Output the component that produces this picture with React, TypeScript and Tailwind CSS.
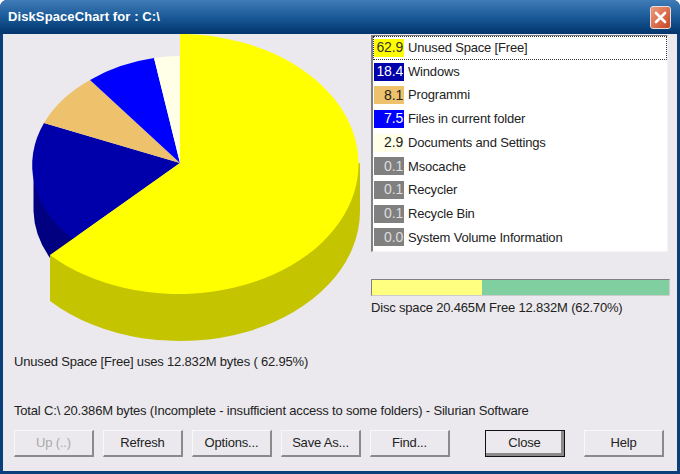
const rows = [
  { value: "62.9", label: "Unused Space [Free]", swatch: "bg-[#ffff00] text-[#333]" },
  { value: "18.4", label: "Windows", swatch: "bg-[#0000aa] text-white" },
  { value: "8.1", label: "Programmi", swatch: "bg-[#eec26c] text-[#222]" },
  { value: "7.5", label: "Files in current folder", swatch: "bg-[#0000ff] text-white" },
  { value: "2.9", label: "Documents and Settings", swatch: "bg-[#ffffe8] text-[#222]" },
  { value: "0.1", label: "Msocache", swatch: "bg-[#808080] text-[#ddd]" },
  { value: "0.1", label: "Recycler", swatch: "bg-[#808080] text-[#ddd]" },
  { value: "0.1", label: "Recycle Bin", swatch: "bg-[#808080] text-[#ddd]" },
  { value: "0.0", label: "System Volume Information", swatch: "bg-[#808080] text-[#ddd]" },
];

function Pie() {
  return (
    <svg width="368" height="316" viewBox="3 34 368 316" className="block shrink-0">
      {/* side walls */}
      <path d="M33.5 163 L33.5 211 A147 107 0 0 0 50 258 L80 240 Z" fill="#000080" />
      <path d="M50 255 L50 301 A180 130 0 0 0 360 211 L360 163 Z" fill="#c4c400" />
      {/* small slices */}
      <path d="M180 163 L44 123 A147 107 0 0 0 73 239 Z" fill="#0000aa" />
      <path d="M180 163 L90 80 A147 107 0 0 0 44 123 Z" fill="#eec26c" />
      <path d="M180 163 L154 58 A147 107 0 0 0 90 80 Z" fill="#0000ff" />
      <path d="M180 163 L180 56 A147 107 0 0 0 154 58 Z" fill="#ffffe8" />
      {/* free space */}
      <path d="M180 163 L180 34 A180 130 0 1 1 50 255 Z" fill="#ffff00" />
    </svg>
  );
}

function Button({ label, className = "" }: { label: string; className?: string }) {
  return (
    <button
      className={`h-[27px] w-[80px] bg-[#ebe9ed] border border-[#f8f8f8] border-r-[#8a8a8a] border-b-[#8a8a8a] border-b-2 border-r-2 text-[13px] tracking-[-0.18px] ${className}`}
    >
      {label}
    </button>
  );
}

export default function App() {
  return (
    <div className="w-[680px] h-[474px] bg-white font-['Liberation_Sans',sans-serif] text-[13px] tracking-[-0.18px] text-[#222] overflow-hidden">
      <div className="w-full h-full flex flex-col rounded-t-[7px] overflow-hidden bg-[#0a3f7c] pb-[3px]">
        {/* title bar */}
        <div className="h-[34px] shrink-0 flex items-center justify-between pl-[8px] pr-[9px] bg-gradient-to-b from-[#3f7cb8] via-[#1a5a98] to-[#03356d]">
          <span className="text-[13px] font-bold text-white tracking-[0.1px]">
            DiskSpaceChart for : C:\
          </span>
          <div className="w-[21px] h-[23px] rounded-[3px] bg-gradient-to-br from-[#ee9a7c] to-[#c6431f] border border-[#e8e0d8] flex items-center justify-center">
            <svg width="13" height="13" viewBox="0 0 13 13">
              <path d="M2 2 L11 11 M11 2 L2 11" stroke="white" strokeWidth="2.6" strokeLinecap="round" />
            </svg>
          </div>
        </div>

        {/* dialog body */}
        <div className="flex-1 mx-[3px] bg-[#ebe9ed] flex flex-col min-h-0">
          <div className="flex h-[316px]">
            <Pie />
            <div className="flex flex-col pt-[1px]">
              <ul className="w-[297px] h-[217px] bg-white border-l-2 border-t border-[#808080] border-r border-r-[#f4f4f4] border-b border-b-[#f4f4f4]">
                {rows.map((r, i) => (
                  <li
                    key={r.label}
                    className={`h-[23.7px] flex items-center gap-[4px] pl-[1px] ${i === 0 ? "outline-1 outline-dotted outline-[#333] -outline-offset-1" : ""}`}
                  >
                    <span className={`w-[30px] h-[18px] flex items-center justify-end pr-[1px] text-[14px] ${r.swatch}`}>
                      {r.value}
                    </span>
                    <span>{r.label}</span>
                  </li>
                ))}
              </ul>
              <div className="mt-[27px] w-[299px] h-[17px] flex border border-[#808080] border-r-[#ccc] border-b-[#ccc] bg-[#7fcfa0]">
                <div className="w-[110px] bg-[#ffff80]" />
              </div>
              <p className="mt-[4px] leading-[16px]">Disc space 20.465M Free 12.832M (62.70%)</p>
            </div>
          </div>

          <p className="ml-[11px] mt-[4px] leading-[16px]">Unused Space [Free] uses 12.832M bytes ( 62.95%)</p>
          <p className="ml-[11px] mt-[33px] leading-[16px]">
            Total C:\ 20.386M bytes (Incomplete - insufficient access to some folders) - Silurian Software
          </p>

          <div className="flex mt-[11px] ml-[11px]">
            <Button label="Up (..)" className="text-[#aaa]" />
            <Button label="Refresh" className="ml-[9px]" />
            <Button label="Options..." className="ml-[9px]" />
            <Button label="Save As..." className="ml-[9px]" />
            <Button label="Find..." className="ml-[9px]" />
            <Button label="Close" className="ml-[35px] outline outline-1 outline-[#111] -outline-offset-1 shadow-[inset_-2px_-2px_0_#8a8a8a]" />
            <Button label="Help" className="ml-[19px]" />
          </div>
        </div>
      </div>
    </div>
  );
}
